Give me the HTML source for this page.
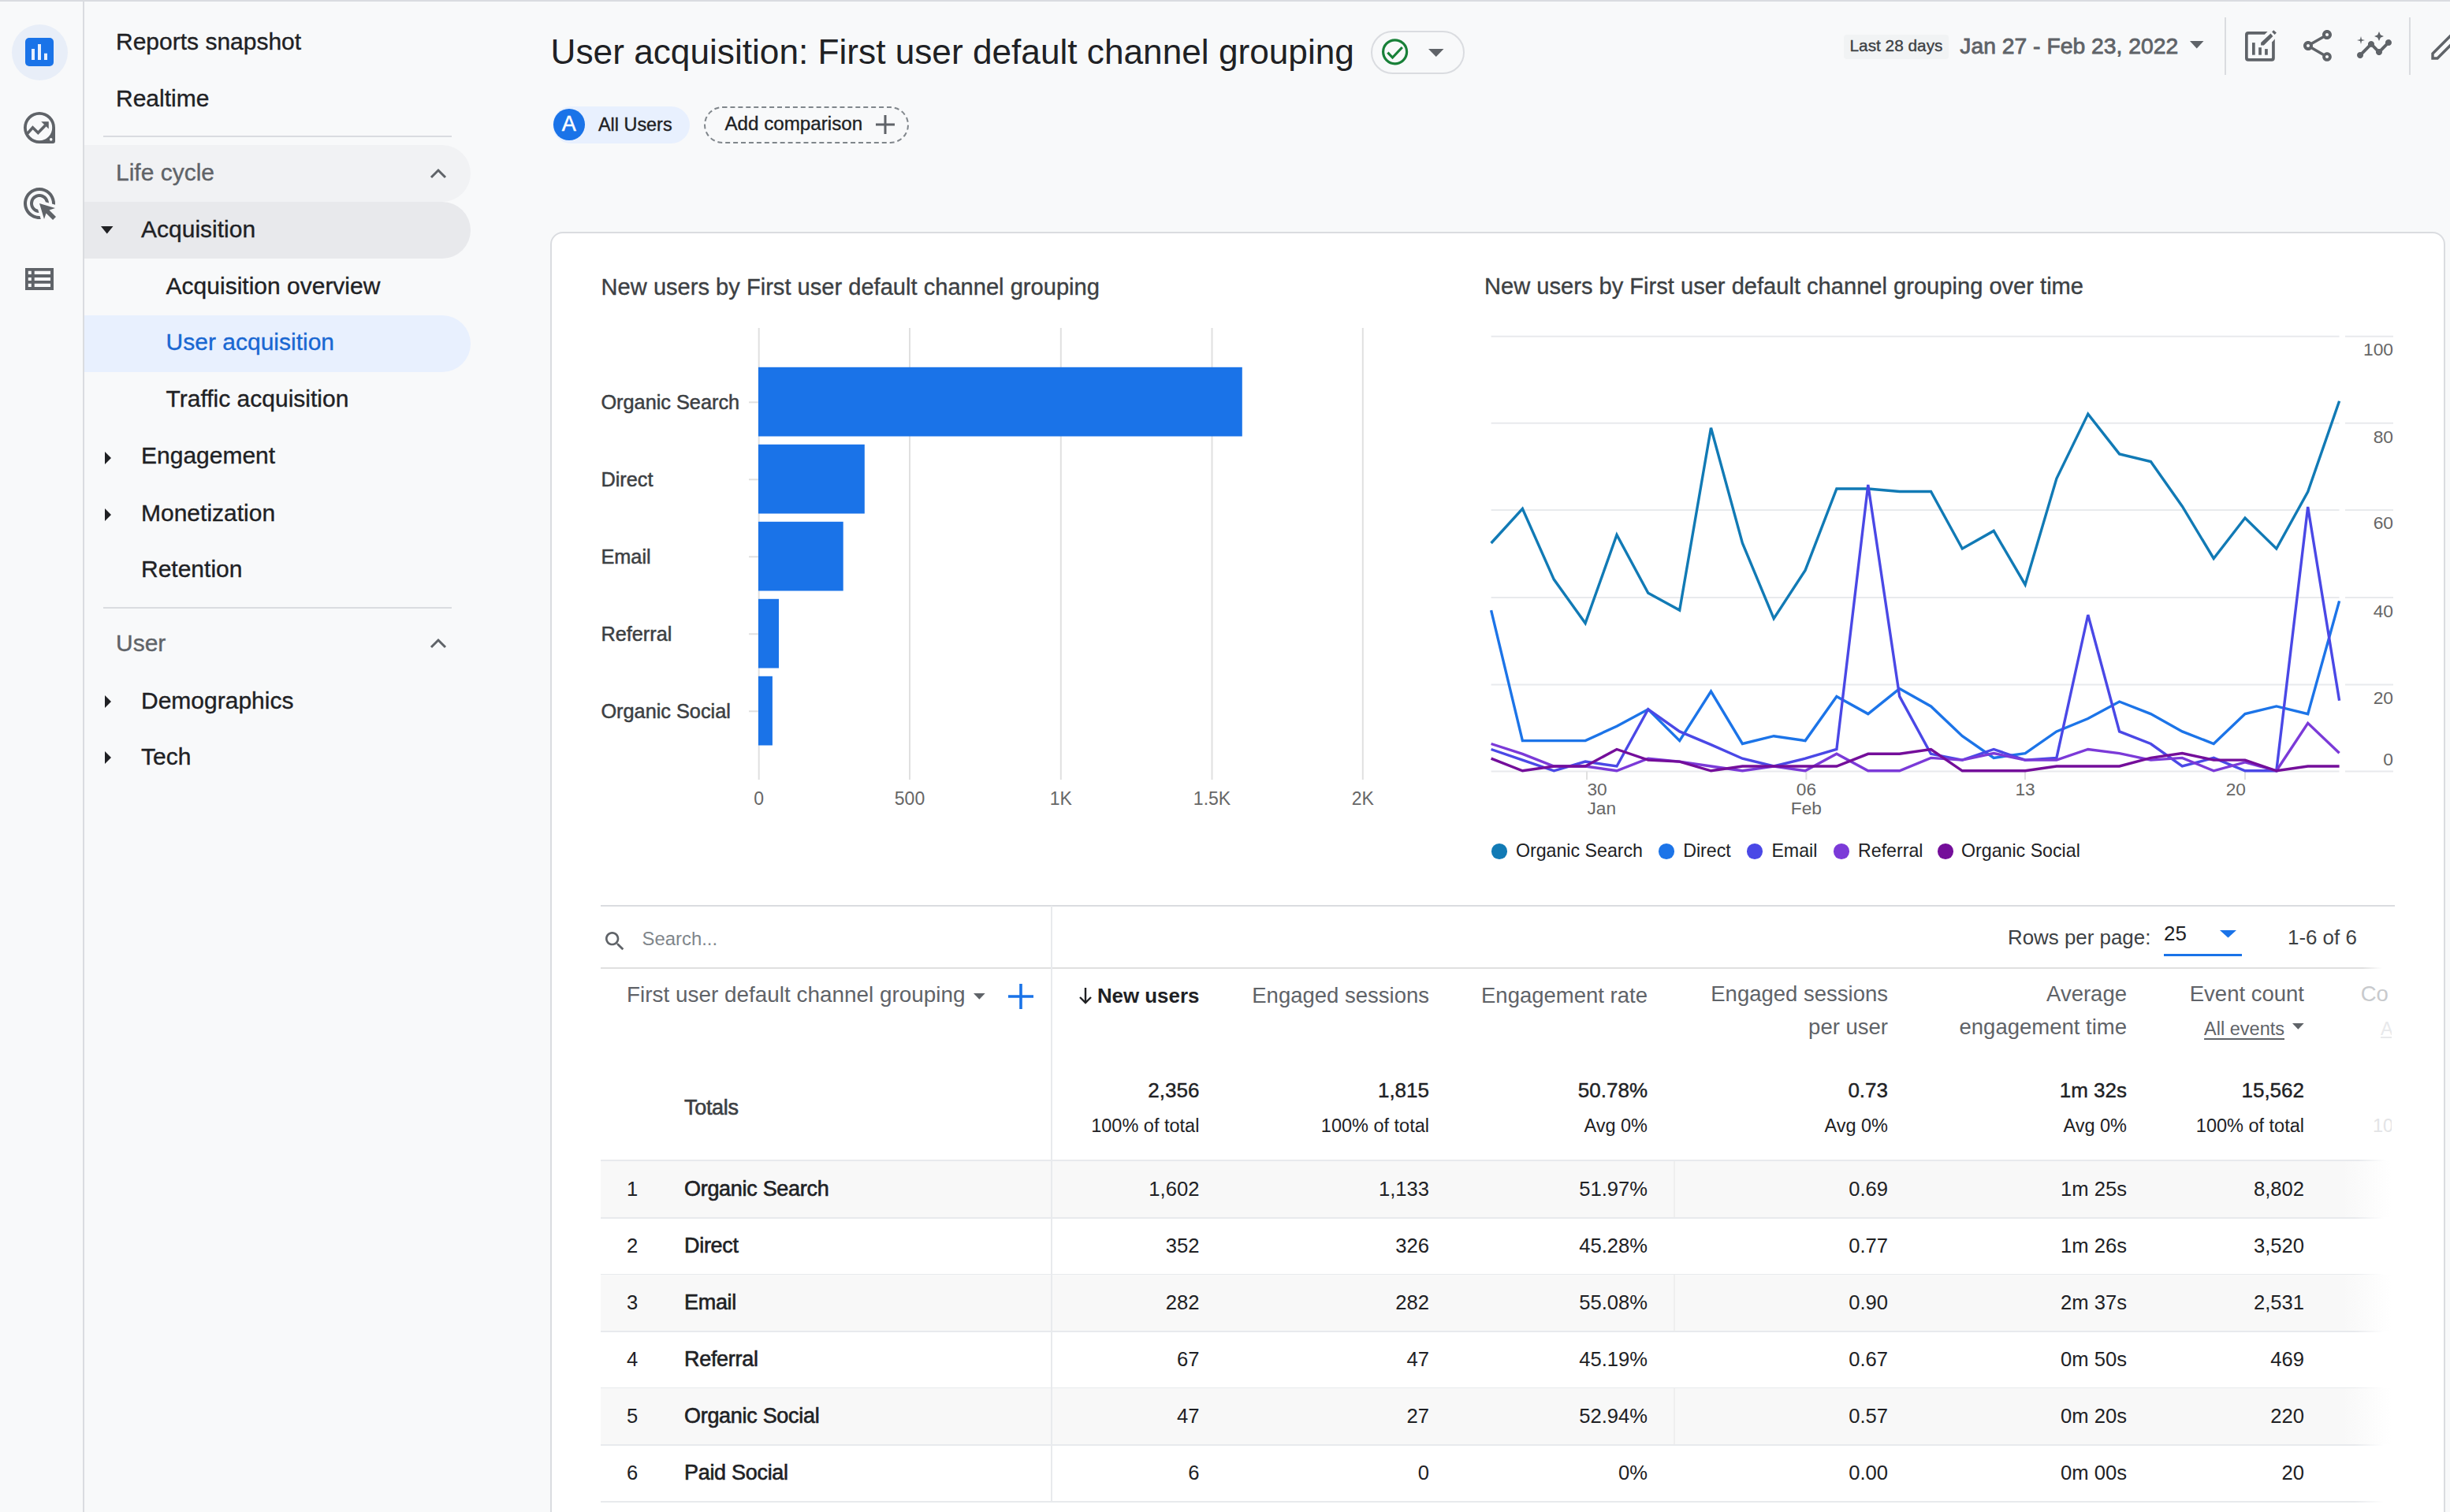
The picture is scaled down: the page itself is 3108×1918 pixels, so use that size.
<!DOCTYPE html>
<html><head><meta charset="utf-8"><style>
html,body{margin:0;padding:0;}
body{width:3108px;height:1918px;position:relative;overflow:hidden;background:#f8f9fa;font-family:"Liberation Sans",sans-serif;}
.t{position:absolute;line-height:0;white-space:nowrap;}
svg{overflow:visible}
</style></head><body>
<div style="position:absolute;left:0.0px;top:0.0px;width:3108.0px;height:2.0px;background:#dadce0;"></div>
<div style="position:absolute;left:105.0px;top:2.0px;width:2.0px;height:1916.0px;background:#dadce0;"></div>
<div style="position:absolute;left:14.5px;top:30.5px;width:71px;height:71px;border-radius:50%;background:#e8eef8"></div>
<svg style="position:absolute;left:32px;top:48px" width="36" height="36" viewBox="0 0 36 36"><rect x="0" y="0" width="36" height="36" rx="5" fill="#1a73e8"/><rect x="8" y="14" width="4" height="14" fill="#e8f0fe"/><rect x="16" y="8" width="4" height="20" fill="#e8f0fe"/><rect x="24" y="19.7" width="4" height="8.3" fill="#e8f0fe"/></svg>
<svg style="position:absolute;left:30px;top:142px" width="40" height="40" viewBox="0 0 40 40"><path fill="#5f6368" fill-rule="evenodd" d="M20 0 A20 20 0 0 0 0 20 A20 20 0 0 0 20 40 L37 40 Q40 40 40 37 L40 20 A20 20 0 0 0 20 0 Z M20 3.8 A16.2 16.2 0 1 0 20 36.2 A16.2 16.2 0 1 0 20 3.8 Z M34.7 33.1 A1.8 1.8 0 1 0 34.7 36.7 A1.8 1.8 0 1 0 34.7 33.1 Z"/><path fill="#5f6368" d="M34.7 33.1 A1.8 1.8 0 1 0 34.7 36.7 A1.8 1.8 0 1 0 34.7 33.1 Z" style="display:none"/><polyline points="4.6,27.6 11.5,19.8 18.3,26.5 27.5,17" fill="none" stroke="#5f6368" stroke-width="3.6" stroke-linejoin="miter"/><polygon points="22.2,12.3 31.75,12.3 31.75,21.4" fill="#5f6368"/></svg>
<svg style="position:absolute;left:26px;top:234px" width="48" height="48" viewBox="0 0 24 24"><path fill="#5f6368" d="M11.71,17.99C8.53,17.84,6,15.22,6,12c0-3.31,2.69-6,6-6c3.22,0,5.84,2.53,5.99,5.71l-2.1-0.63C15.48,9.31,13.89,8,12,8 c-2.21,0-4,1.79-4,4c0,1.89,1.31,3.48,3.08,3.89L11.71,17.99z M22,12c0,0.3-0.01,0.6-0.04,0.9l-1.97-0.59C20,12.21,20,12.1,20,12 c0-4.42-3.58-8-8-8s-8,3.58-8,8s3.58,8,8,8c0.1,0,0.21,0,0.31-0.01l0.59,1.97C12.6,21.99,12.3,22,12,22C6.48,22,2,17.52,2,12 C2,6.48,6.48,2,12,2S22,6.48,22,12z M18.23,16.26L22,15l-10-3l3,10l1.26-3.77l4.27,4.27l1.97-1.97L18.23,16.26z"/></svg>
<svg style="position:absolute;left:32px;top:340px" width="36" height="28" viewBox="0 0 36 28"><path fill="#5f6368" fill-rule="evenodd" d="M0 0H36V28H0Z M3.8 3.8H7.8V7.9H3.8Z M11.7 3.8H32V7.9H11.7Z M3.8 11.9H7.8V15.9H3.8Z M11.7 11.9H32V15.9H11.7Z M3.8 19.8H7.8V24H3.8Z M11.7 19.8H32V24H11.7Z"/></svg>
<div style="position:absolute;left:131.0px;top:171.5px;width:442.0px;height:2.0px;background:#dadce0;"></div>
<div style="position:absolute;left:131.0px;top:769.5px;width:442.0px;height:2.0px;background:#dadce0;"></div>
<div style="position:absolute;left:107px;top:184px;width:490px;height:72px;background:#f1f2f4;border-radius:0 36px 36px 0"></div>
<div style="position:absolute;left:107px;top:256px;width:490px;height:72px;background:#e8e9ec;border-radius:0 36px 36px 0"></div>
<div style="position:absolute;left:107px;top:400px;width:490px;height:72px;background:#e8f0fe;border-radius:0 36px 36px 0"></div>
<div class="t" style="left:147.0px;top:53.0px;font-size:30px;color:#202124;font-weight:400;-webkit-text-stroke:0.35px currentColor;">Reports snapshot</div>
<div class="t" style="left:147.0px;top:125.0px;font-size:30px;color:#202124;font-weight:400;-webkit-text-stroke:0.35px currentColor;">Realtime</div>
<div class="t" style="left:147.0px;top:218.5px;font-size:30px;color:#5f6368;font-weight:400;-webkit-text-stroke:0.35px currentColor;">Life cycle</div>
<div class="t" style="left:179.0px;top:290.5px;font-size:30px;color:#202124;font-weight:400;-webkit-text-stroke:0.35px currentColor;">Acquisition</div>
<div class="t" style="left:210.6px;top:363.0px;font-size:30px;color:#202124;font-weight:400;-webkit-text-stroke:0.35px currentColor;">Acquisition overview</div>
<div class="t" style="left:210.6px;top:434.0px;font-size:30px;color:#1967d2;font-weight:400;-webkit-text-stroke:0.35px currentColor;">User acquisition</div>
<div class="t" style="left:210.6px;top:505.5px;font-size:30px;color:#202124;font-weight:400;-webkit-text-stroke:0.35px currentColor;">Traffic acquisition</div>
<div class="t" style="left:179.0px;top:578.0px;font-size:30px;color:#202124;font-weight:400;-webkit-text-stroke:0.35px currentColor;">Engagement</div>
<div class="t" style="left:179.0px;top:650.5px;font-size:30px;color:#202124;font-weight:400;-webkit-text-stroke:0.35px currentColor;">Monetization</div>
<div class="t" style="left:179.0px;top:722.1px;font-size:30px;color:#202124;font-weight:400;-webkit-text-stroke:0.35px currentColor;">Retention</div>
<div class="t" style="left:147.0px;top:816.1px;font-size:30px;color:#5f6368;font-weight:400;-webkit-text-stroke:0.35px currentColor;">User</div>
<div class="t" style="left:179.0px;top:888.5px;font-size:30px;color:#202124;font-weight:400;-webkit-text-stroke:0.35px currentColor;">Demographics</div>
<div class="t" style="left:179.0px;top:960.0px;font-size:30px;color:#202124;font-weight:400;-webkit-text-stroke:0.35px currentColor;">Tech</div>
<svg style="position:absolute;left:544px;top:209.5px" width="24" height="18" viewBox="0 0 24 18"><polyline points="3,15 12,6 21,15" fill="none" stroke="#5f6368" stroke-width="3"/></svg>
<svg style="position:absolute;left:544px;top:806px" width="24" height="18" viewBox="0 0 24 18"><polyline points="3,15 12,6 21,15" fill="none" stroke="#5f6368" stroke-width="3"/></svg>
<svg style="position:absolute;left:128px;top:287px" width="16" height="10" viewBox="0 0 16 10"><polygon points="0,0 15.5,0 7.75,9.5" fill="#202124"/></svg>
<svg style="position:absolute;left:133px;top:572.5px" width="9" height="16" viewBox="0 0 9 16"><polygon points="0,0 8,8 0,16" fill="#202124"/></svg>
<svg style="position:absolute;left:133px;top:644.6px" width="9" height="16" viewBox="0 0 9 16"><polygon points="0,0 8,8 0,16" fill="#202124"/></svg>
<svg style="position:absolute;left:133px;top:881.9px" width="9" height="16" viewBox="0 0 9 16"><polygon points="0,0 8,8 0,16" fill="#202124"/></svg>
<svg style="position:absolute;left:133px;top:953.4px" width="9" height="16" viewBox="0 0 9 16"><polygon points="0,0 8,8 0,16" fill="#202124"/></svg>
<div class="t" style="left:698.6px;top:65.5px;font-size:44.2px;color:#202124;font-weight:400;">User acquisition: First user default channel grouping</div>
<div style="position:absolute;left:1738.5px;top:38.5px;width:115px;height:51px;border:2px solid #dadce0;border-radius:28px"></div>
<svg style="position:absolute;left:1750px;top:46px" width="40" height="40" viewBox="0 0 40 40"><circle cx="19.6" cy="19.8" r="15" fill="none" stroke="#188038" stroke-width="3.2"/><polyline points="10.4,20.7 16.5,27 28.8,14" fill="none" stroke="#188038" stroke-width="3.2"/></svg>
<svg style="position:absolute;left:1812px;top:62px" width="20" height="10" viewBox="0 0 20 10"><polygon points="0,0 19.5,0 9.75,10" fill="#5f6368"/></svg>
<div style="position:absolute;left:700.5px;top:134.5px;width:174.5px;height:47px;background:#e8f0fe;border-radius:24px"></div>
<div style="position:absolute;left:702px;top:138px;width:39.6px;height:39.6px;background:#1a73e8;border-radius:50%"></div>
<div class="t" style="left:721.8px;transform:translateX(-50%);top:156.8px;font-size:27px;color:#ffffff;font-weight:400;-webkit-text-stroke:0.5px currentColor;">A</div>
<div class="t" style="left:759.0px;top:157.5px;font-size:23.4px;color:#202124;font-weight:400;-webkit-text-stroke:0.35px currentColor;">All Users</div>
<div style="position:absolute;left:892.5px;top:134.5px;width:256px;height:43px;border:2px dashed #80868b;border-radius:24px"></div>
<div class="t" style="left:919.4px;top:157.2px;font-size:24.2px;color:#202124;font-weight:400;-webkit-text-stroke:0.35px currentColor;">Add comparison</div>
<svg style="position:absolute;left:1111px;top:146px" width="24" height="24" viewBox="0 0 24 24"><path d="M12 0V24M0 12H24" stroke="#5f6368" stroke-width="3"/></svg>
<div style="position:absolute;left:2338.5px;top:43.5px;width:133.5px;height:31.5px;background:#f1f3f4;border-radius:4px"></div>
<div class="t" style="left:2346.5px;top:58.4px;font-size:20.8px;color:#3c4043;font-weight:400;-webkit-text-stroke:0.35px currentColor;">Last 28 days</div>
<div class="t" style="left:2486.3px;top:57.9px;font-size:28.3px;color:#5f6368;font-weight:400;-webkit-text-stroke:0.8px currentColor;">Jan 27 - Feb 23, 2022</div>
<svg style="position:absolute;left:2778px;top:52px" width="18" height="10" viewBox="0 0 18 10"><polygon points="0,0 17.5,0 8.75,9.6" fill="#5f6368"/></svg>
<div style="position:absolute;left:2822.0px;top:22.0px;width:2.0px;height:73.0px;background:#dadce0;"></div>
<div style="position:absolute;left:3056.0px;top:22.0px;width:2.0px;height:73.0px;background:#dadce0;"></div>
<svg style="position:absolute;left:2846px;top:36px" width="44" height="44" viewBox="0 0 44 44"><path fill="#5f6368" fill-rule="evenodd" d="M6 4H35.8Q39.8 4 39.8 8V37.7Q39.8 41.7 35.8 41.7H6Q2 41.7 2 37.7V8Q2 4 6 4Z M6.7 7.7H35.1Q36.1 7.7 36.1 8.7V36.9Q36.1 37.9 35.1 37.9H6.7Q5.7 37.9 5.7 36.9V8.7Q5.7 7.7 6.7 7.7Z"/><polygon points="26.9,7.8 30.6,4 35.6,-1 45,-1 45,8.4 39.8,13.6 36.4,17.3" fill="#f8f9fa"/><rect x="11" y="18.1" width="3.7" height="15.6" fill="#5f6368"/><rect x="19.2" y="24.2" width="3.7" height="9.5" fill="#5f6368"/><rect x="27.1" y="26.1" width="3.7" height="7.6" fill="#5f6368"/><polygon points="22.1,17.9 34.5,6.5 37.4,9.9 25.8,21.6 22.1,21.6" fill="#5f6368"/><polygon points="36.1,4.4 38.2,2.3 41.9,5.4 39.6,8.1" fill="#5f6368"/></svg>
<svg style="position:absolute;left:2916px;top:33.8px" width="48" height="48" viewBox="0 0 24 24"><path fill="#5f6368" d="M18 16.08c-.76 0-1.44.3-1.96.77L8.91 12.7c.05-.23.09-.46.09-.7s-.04-.47-.09-.7l7.05-4.11c.54.5 1.250.81 2.04.81 1.66 0 3-1.34 3-3s-1.34-3-3-3-3 1.34-3 3c0 .24.04.47.09.7L8.04 9.81C7.5 9.31 6.79 9 6 9c-1.66 0-3 1.34-3 3s1.34 3 3 3c.79 0 1.5-.31 2.04-.81l7.12 4.16c-.05.21-.08.43-.08.65 0 1.61 1.31 2.92 2.92 2.92 1.61 0 2.92-1.31 2.92-2.920s-1.31-2.92-2.92-2.92zM18 4c.55 0 1 .45 1 1s-.45 1-1 1-1-.45-1-1 .45-1 1-1zM6 13c-.55 0-1-.45-1-1s.45-1 1-1 1 .45 1 1-.45 1-1 1zm12 7.02c-.55 0-1-.45-1-1s.45-1 1-1 1 .45 1 1-.45 1-1 1z"/></svg>
<svg style="position:absolute;left:2988px;top:34px" width="48" height="48" viewBox="0 0 24 24"><path fill="#5f6368" d="M21,8c-1.45,0-2.26,1.44-1.93,2.51l-3.55,3.56c-0.3-0.09-0.74-0.09-1.04,0l-2.55-2.55C12.27,10.45,11.46,9,10,9 c-1.45,0-2.27,1.440-1.93,2.52l-4.56,4.55C2.44,15.74,1,16.55,1,18c0,1.1,0.9,2,2,2c1.45,0,2.26-1.44,1.93-2.51l4.55-4.56 c0.3,0.09,0.74,0.09,1.04,0l2.55,2.55C12.73,16.55,13.54,18,15,18c1.45,0,2.27-1.44,1.93-2.52l3.56-3.55 C21.56,12.26,23,11.45,23,10C23,8.9,22.1,8,21,8z M15,9l0.94-2.07L18,6l-2.06-0.93L15,3l-0.92,2.07L12,6l2.08,0.93L15,9z M3.5,11L4,9l2-0.5L4,8L3.5,6L3,8L1,8.5L3,9L3.5,11z"/></svg>
<svg style="position:absolute;left:3080px;top:30px" width="28" height="50" viewBox="0 0 28 50"><path d="M6 44 L6 38 L40 4 L46 10 L12 44 Z" fill="none" stroke="#5f6368" stroke-width="3.4"/></svg>
<div style="position:absolute;left:698px;top:293.5px;width:2404px;height:1700px;background:#fff;border:2px solid #dadce0;border-radius:16px;box-sizing:border-box"></div>
<div class="t" style="left:762.6px;top:363.8px;font-size:29.1px;color:#3c4043;font-weight:400;-webkit-text-stroke:0.35px currentColor;">New users by First user default channel grouping</div>
<svg style="position:absolute;left:0;top:0" width="3108" height="1918"><line x1="962.7" y1="416" x2="962.7" y2="989" stroke="#e0e0e0" stroke-width="2"/><line x1="1154" y1="416" x2="1154" y2="989" stroke="#e0e0e0" stroke-width="2"/><line x1="1345.8" y1="416" x2="1345.8" y2="989" stroke="#e0e0e0" stroke-width="2"/><line x1="1537.5" y1="416" x2="1537.5" y2="989" stroke="#e0e0e0" stroke-width="2"/><line x1="1728.8" y1="416" x2="1728.8" y2="989" stroke="#e0e0e0" stroke-width="2"/><rect x="962" y="465.8" width="613.8" height="87.7" fill="#1a73e8"/><line x1="950" y1="510.3" x2="962" y2="510.3" stroke="#e0e0e0" stroke-width="2"/><rect x="962" y="563.8" width="134.8" height="87.7" fill="#1a73e8"/><line x1="950" y1="608.3" x2="962" y2="608.3" stroke="#e0e0e0" stroke-width="2"/><rect x="962" y="661.8" width="107.7" height="87.7" fill="#1a73e8"/><line x1="950" y1="706.3" x2="962" y2="706.3" stroke="#e0e0e0" stroke-width="2"/><rect x="962" y="759.8" width="26.0" height="87.7" fill="#1a73e8"/><line x1="950" y1="804.3" x2="962" y2="804.3" stroke="#e0e0e0" stroke-width="2"/><rect x="962" y="857.8" width="17.9" height="87.7" fill="#1a73e8"/><line x1="950" y1="902.3" x2="962" y2="902.3" stroke="#e0e0e0" stroke-width="2"/></svg>
<div class="t" style="left:762.4px;top:510.1px;font-size:25.3px;color:#3c4043;font-weight:400;-webkit-text-stroke:0.5px currentColor;">Organic Search</div>
<div class="t" style="left:762.4px;top:608.1px;font-size:25.3px;color:#3c4043;font-weight:400;-webkit-text-stroke:0.5px currentColor;">Direct</div>
<div class="t" style="left:762.4px;top:706.1px;font-size:25.3px;color:#3c4043;font-weight:400;-webkit-text-stroke:0.5px currentColor;">Email</div>
<div class="t" style="left:762.4px;top:804.1px;font-size:25.3px;color:#3c4043;font-weight:400;-webkit-text-stroke:0.5px currentColor;">Referral</div>
<div class="t" style="left:762.4px;top:902.1px;font-size:25.3px;color:#3c4043;font-weight:400;-webkit-text-stroke:0.5px currentColor;">Organic Social</div>
<div class="t" style="left:962.7px;transform:translateX(-50%);top:1013.0px;font-size:23px;color:#666666;font-weight:400;">0</div>
<div class="t" style="left:1154.0px;transform:translateX(-50%);top:1013.0px;font-size:23px;color:#666666;font-weight:400;">500</div>
<div class="t" style="left:1345.8px;transform:translateX(-50%);top:1013.0px;font-size:23px;color:#666666;font-weight:400;">1K</div>
<div class="t" style="left:1537.5px;transform:translateX(-50%);top:1013.0px;font-size:23px;color:#666666;font-weight:400;">1.5K</div>
<div class="t" style="left:1728.8px;transform:translateX(-50%);top:1013.0px;font-size:23px;color:#666666;font-weight:400;">2K</div>
<div class="t" style="left:1883.0px;top:362.8px;font-size:29.1px;color:#3c4043;font-weight:400;-webkit-text-stroke:0.35px currentColor;">New users by First user default channel grouping over time</div>
<svg style="position:absolute;left:0;top:0" width="3108" height="1918"><line x1="1891.6" y1="426.8" x2="2967.5" y2="426.8" stroke="#e8eaed" stroke-width="2"/><line x1="2975" y1="426.8" x2="3036" y2="426.8" stroke="#e8eaed" stroke-width="2"/><line x1="1891.6" y1="536.8" x2="2967.5" y2="536.8" stroke="#e8eaed" stroke-width="2"/><line x1="2975" y1="536.8" x2="3036" y2="536.8" stroke="#e8eaed" stroke-width="2"/><line x1="1891.6" y1="646.9" x2="2967.5" y2="646.9" stroke="#e8eaed" stroke-width="2"/><line x1="2975" y1="646.9" x2="3036" y2="646.9" stroke="#e8eaed" stroke-width="2"/><line x1="1891.6" y1="758" x2="2967.5" y2="758" stroke="#e8eaed" stroke-width="2"/><line x1="2975" y1="758" x2="3036" y2="758" stroke="#e8eaed" stroke-width="2"/><line x1="1891.6" y1="868.5" x2="2967.5" y2="868.5" stroke="#e8eaed" stroke-width="2"/><line x1="2975" y1="868.5" x2="3036" y2="868.5" stroke="#e8eaed" stroke-width="2"/><line x1="1891.6" y1="978.6" x2="2967.5" y2="978.6" stroke="#e8eaed" stroke-width="2"/><line x1="2975" y1="978.6" x2="3036" y2="978.6" stroke="#e8eaed" stroke-width="2"/><line x1="2013" y1="978.6" x2="2013" y2="989" stroke="#e0e0e0" stroke-width="2"/><line x1="2291.4" y1="978.6" x2="2291.4" y2="989" stroke="#e0e0e0" stroke-width="2"/><line x1="2569" y1="978.6" x2="2569" y2="989" stroke="#e0e0e0" stroke-width="2"/><line x1="2848" y1="978.6" x2="2848" y2="989" stroke="#e0e0e0" stroke-width="2"/><polyline points="1891.6,689.0 1931.4,645.3 1971.3,735.1 2011.1,790.5 2051.0,678.5 2090.8,752.2 2130.7,774.1 2170.5,542.7 2210.4,689.0 2250.2,784.6 2290.1,723.4 2329.9,620.0 2369.8,620.0 2409.7,623.5 2449.5,623.5 2489.3,696.0 2529.2,673.4 2569.1,741.7 2608.9,607.1 2648.8,525.1 2688.6,575.9 2728.4,585.6 2768.3,642.2 2808.2,708.5 2848.0,657.0 2887.8,696.0 2927.7,623.9 2967.6,508.7" fill="none" stroke="#117ab5" stroke-width="3.4" stroke-linejoin="miter" stroke-miterlimit="4"/><polyline points="1891.6,774.1 1931.4,939.6 1971.3,939.6 2011.1,939.6 2051.0,921.2 2090.8,899.8 2130.7,939.6 2170.5,877.1 2210.4,943.5 2250.2,933.7 2290.1,939.6 2329.9,883.4 2369.8,905.6 2409.7,873.6 2449.5,895.9 2489.3,933.7 2529.2,961.4 2569.1,955.6 2608.9,927.9 2648.8,911.5 2688.6,890.0 2728.4,905.6 2768.3,927.9 2808.2,943.5 2848.0,905.6 2887.8,895.9 2927.7,905.6 2967.6,762.4" fill="none" stroke="#1c74e8" stroke-width="3.4" stroke-linejoin="miter" stroke-miterlimit="4"/><polyline points="1891.6,950.5 1931.4,964.1 1971.3,977.8 2011.1,966.1 2051.0,972.0 2090.8,899.8 2130.7,927.9 2170.5,944.6 2210.4,962.2 2250.2,972.0 2290.1,962.2 2329.9,950.5 2369.8,614.9 2409.7,883.4 2449.5,956.3 2489.3,964.1 2529.2,950.5 2569.1,964.1 2608.9,961.4 2648.8,780.0 2688.6,927.9 2728.4,943.5 2768.3,972.0 2808.2,961.4 2848.0,977.8 2887.8,977.8 2927.7,643.0 2967.6,888.8" fill="none" stroke="#4a48e6" stroke-width="3.4" stroke-linejoin="miter" stroke-miterlimit="4"/><polyline points="1891.6,943.5 1931.4,956.3 1971.3,972.0 2011.1,972.0 2051.0,977.8 2090.8,962.2 2130.7,966.1 2170.5,972.0 2210.4,977.8 2250.2,972.0 2290.1,977.8 2329.9,956.3 2369.8,977.8 2409.7,977.8 2449.5,961.4 2489.3,964.1 2529.2,955.6 2569.1,964.1 2608.9,964.1 2648.8,950.5 2688.6,955.6 2728.4,964.1 2768.3,961.4 2808.2,977.8 2848.0,966.9 2887.8,977.8 2927.7,917.3 2967.6,955.2" fill="none" stroke="#7b3ad8" stroke-width="3.4" stroke-linejoin="miter" stroke-miterlimit="4"/><polyline points="1891.6,962.2 1931.4,977.8 1971.3,972.0 2011.1,972.0 2051.0,950.5 2090.8,964.1 2130.7,966.1 2170.5,977.8 2210.4,972.0 2250.2,972.0 2290.1,972.0 2329.9,972.0 2369.8,956.3 2409.7,956.3 2449.5,950.5 2489.3,977.8 2529.2,977.8 2569.1,977.8 2608.9,972.0 2648.8,972.0 2688.6,972.0 2728.4,961.4 2768.3,955.6 2808.2,964.1 2848.0,964.1 2887.8,977.8 2927.7,972.0 2967.6,972.0" fill="none" stroke="#740e9a" stroke-width="3.4" stroke-linejoin="miter" stroke-miterlimit="4"/></svg>
<div class="t" style="right:72.0px;top:443.0px;font-size:22.8px;color:#666666;font-weight:400;">100</div>
<div class="t" style="right:72.0px;top:553.7px;font-size:22.8px;color:#666666;font-weight:400;">80</div>
<div class="t" style="right:72.0px;top:663.0px;font-size:22.8px;color:#666666;font-weight:400;">60</div>
<div class="t" style="right:72.0px;top:775.0px;font-size:22.8px;color:#666666;font-weight:400;">40</div>
<div class="t" style="right:72.0px;top:884.7px;font-size:22.8px;color:#666666;font-weight:400;">20</div>
<div class="t" style="right:72.0px;top:962.6px;font-size:22.8px;color:#666666;font-weight:400;">0</div>
<div class="t" style="left:2013.5px;top:1001.1px;font-size:22.7px;color:#666666;font-weight:400;">30</div>
<div class="t" style="left:2013.5px;top:1025.1px;font-size:22.7px;color:#666666;font-weight:400;">Jan</div>
<div class="t" style="left:2291.4px;transform:translateX(-50%);top:1001.1px;font-size:22.7px;color:#666666;font-weight:400;">06</div>
<div class="t" style="left:2291.4px;transform:translateX(-50%);top:1025.1px;font-size:22.7px;color:#666666;font-weight:400;">Feb</div>
<div class="t" style="left:2569.0px;transform:translateX(-50%);top:1001.1px;font-size:22.7px;color:#666666;font-weight:400;">13</div>
<div class="t" style="right:259.0px;top:1001.1px;font-size:22.7px;color:#666666;font-weight:400;">20</div>
<div style="position:absolute;left:1892.2px;top:1070.2px;width:19.6px;height:19.6px;border-radius:50%;background:#117ab5"></div>
<div class="t" style="left:1922.9px;top:1079.3px;font-size:23.2px;color:#202124;font-weight:400;">Organic Search</div>
<div style="position:absolute;left:2104.1px;top:1070.2px;width:19.6px;height:19.6px;border-radius:50%;background:#1c74e8"></div>
<div class="t" style="left:2135.2px;top:1079.3px;font-size:23.2px;color:#202124;font-weight:400;">Direct</div>
<div style="position:absolute;left:2216.0px;top:1070.2px;width:19.6px;height:19.6px;border-radius:50%;background:#4a48e6"></div>
<div class="t" style="left:2247.4px;top:1079.3px;font-size:23.2px;color:#202124;font-weight:400;">Email</div>
<div style="position:absolute;left:2326.2px;top:1070.2px;width:19.6px;height:19.6px;border-radius:50%;background:#7b3ad8"></div>
<div class="t" style="left:2357.0px;top:1079.3px;font-size:23.2px;color:#202124;font-weight:400;">Referral</div>
<div style="position:absolute;left:2458.0px;top:1070.2px;width:19.6px;height:19.6px;border-radius:50%;background:#740e9a"></div>
<div class="t" style="left:2488.0px;top:1079.3px;font-size:23.2px;color:#202124;font-weight:400;">Organic Social</div>
<div style="position:absolute;left:762.0px;top:1147.7px;width:2276.0px;height:2.0px;background:#dadce0;"></div>
<div style="position:absolute;left:762.0px;top:1226.8px;width:2276.0px;height:2.0px;background:linear-gradient(90deg,#e0e0e0 0,#e0e0e0 2235px,rgba(255,255,255,0) 2260px);"></div>
<div style="position:absolute;left:1333.3px;top:1149.0px;width:2.0px;height:755.0px;background:#e8eaed;"></div>
<svg style="position:absolute;left:764px;top:1178px" width="32" height="32" viewBox="0 0 24 24"><path fill="#5f6368" d="M15.5 14h-.79l-.28-.27C15.41 12.59 16 11.11 16 9.5 16 5.91 13.09 3 9.5 3S3 5.91 3 9.5 5.91 16 9.5 16c1.61 0 3.09-.59 4.23-1.57l.27.28v.79l5 4.99L20.49 19l-4.99-5zm-6 0C7.01 14 5 11.99 5 9.5S7.01 5 9.5 5 14 7.01 14 9.5 11.99 14 9.5 14z"/></svg>
<div class="t" style="left:814.5px;top:1190.6px;font-size:23.9px;color:#80868b;font-weight:400;">Search...</div>
<div class="t" style="left:2547.0px;top:1188.7px;font-size:25.9px;color:#3c4043;font-weight:400;">Rows per page:</div>
<div class="t" style="left:2745.0px;top:1183.5px;font-size:25.9px;color:#202124;font-weight:400;">25</div>
<div style="position:absolute;left:2745.0px;top:1209.5px;width:99.0px;height:3.0px;background:#1a73e8;"></div>
<svg style="position:absolute;left:2816px;top:1179.5px" width="21" height="10" viewBox="0 0 21 10"><polygon points="0,0 21,0 10.5,9.5" fill="#1a73e8"/></svg>
<div class="t" style="left:2902.0px;top:1188.7px;font-size:25.9px;color:#3c4043;font-weight:400;">1-6 of 6</div>
<div class="t" style="left:795.0px;top:1262.0px;font-size:27.9px;color:#5f6368;font-weight:400;">First user default channel grouping</div>
<svg style="position:absolute;left:1234.7px;top:1259.8px" width="15" height="8" viewBox="0 0 15 8"><polygon points="0,0 14.7,0 7.35,7.8" fill="#5f6368"/></svg>
<svg style="position:absolute;left:1278.8px;top:1248.4px" width="32" height="32" viewBox="0 0 32 32"><path d="M16 0V32M0 16H32" stroke="#1a73e8" stroke-width="3.6"/></svg>
<svg style="position:absolute;left:1367px;top:1251px" width="20" height="24" viewBox="0 0 20 24"><path d="M10 2V21M3 14L10 21L17 14" fill="none" stroke="#202124" stroke-width="2.4"/></svg>
<div class="t" style="right:1586.6px;top:1262.7px;font-size:25.9px;color:#202124;font-weight:700;">New users</div>
<div class="t" style="right:1295.0px;top:1262.7px;font-size:27.5px;color:#5f6368;font-weight:400;">Engaged sessions</div>
<div class="t" style="right:1018.0px;top:1262.7px;font-size:27.5px;color:#5f6368;font-weight:400;">Engagement rate</div>
<div class="t" style="right:713.0px;top:1260.8px;font-size:27.5px;color:#5f6368;font-weight:400;">Engaged sessions</div>
<div class="t" style="right:713.0px;top:1302.9px;font-size:27.5px;color:#5f6368;font-weight:400;">per user</div>
<div class="t" style="right:410.0px;top:1260.8px;font-size:27.5px;color:#5f6368;font-weight:400;">Average</div>
<div class="t" style="right:410.0px;top:1302.9px;font-size:27.5px;color:#5f6368;font-weight:400;">engagement time</div>
<div class="t" style="right:185.0px;top:1260.8px;font-size:27.5px;color:#5f6368;font-weight:400;">Event count</div>
<div class="t" style="right:210.0px;top:1304.8px;font-size:23.5px;color:#5f6368;font-weight:400;text-decoration:underline;text-underline-offset:4px;">All events</div>
<svg style="position:absolute;left:2908px;top:1298px" width="15" height="8" viewBox="0 0 15 8"><polygon points="0,0 14.7,0 7.35,7.8" fill="#5f6368"/></svg>
<div class="t" style="left:2994.7px;top:1260.8px;font-size:27.5px;color:#c8cacd;font-weight:400;">Co</div>
<div class="t" style="left:868.0px;top:1404.5px;font-size:27px;color:#3c4043;font-weight:400;letter-spacing:-0.3px;-webkit-text-stroke:0.6px currentColor;">Totals</div>
<div class="t" style="right:1586.6px;top:1383.4px;font-size:26px;color:#202124;font-weight:400;-webkit-text-stroke:0.4px currentColor;">2,356</div>
<div class="t" style="right:1586.6px;top:1428.3px;font-size:23.5px;color:#202124;font-weight:400;">100% of total</div>
<div class="t" style="right:1295.0px;top:1383.4px;font-size:26px;color:#202124;font-weight:400;-webkit-text-stroke:0.4px currentColor;">1,815</div>
<div class="t" style="right:1295.0px;top:1428.3px;font-size:23.5px;color:#202124;font-weight:400;">100% of total</div>
<div class="t" style="right:1018.0px;top:1383.4px;font-size:26px;color:#202124;font-weight:400;-webkit-text-stroke:0.4px currentColor;">50.78%</div>
<div class="t" style="right:1018.0px;top:1428.3px;font-size:23.5px;color:#202124;font-weight:400;">Avg 0%</div>
<div class="t" style="right:713.0px;top:1383.4px;font-size:26px;color:#202124;font-weight:400;-webkit-text-stroke:0.4px currentColor;">0.73</div>
<div class="t" style="right:713.0px;top:1428.3px;font-size:23.5px;color:#202124;font-weight:400;">Avg 0%</div>
<div class="t" style="right:410.0px;top:1383.4px;font-size:26px;color:#202124;font-weight:400;-webkit-text-stroke:0.4px currentColor;">1m 32s</div>
<div class="t" style="right:410.0px;top:1428.3px;font-size:23.5px;color:#202124;font-weight:400;">Avg 0%</div>
<div class="t" style="right:185.0px;top:1383.4px;font-size:26px;color:#202124;font-weight:400;-webkit-text-stroke:0.4px currentColor;">15,562</div>
<div class="t" style="right:185.0px;top:1428.3px;font-size:23.5px;color:#202124;font-weight:400;">100% of total</div>
<div class="t" style="left:3010.0px;top:1428.3px;font-size:23.5px;color:#e3e4e6;font-weight:400;">10</div>
<div class="t" style="left:3020.0px;top:1304.8px;font-size:23.5px;color:#e8e9eb;font-weight:400;text-decoration:underline;">A</div>
<div style="position:absolute;left:762.0px;top:1471.0px;width:2276.0px;height:2.0px;background:linear-gradient(90deg,#e8eaed 0,#e8eaed 2230px,rgba(255,255,255,0) 2265px);"></div>
<div style="position:absolute;left:762.0px;top:1473.0px;width:2276.0px;height:71.0px;background:linear-gradient(90deg,#f8f8f8 0,#f8f8f8 2210px,#ffffff 2272px);"></div>
<div style="position:absolute;left:2123.0px;top:1473.0px;width:2.0px;height:71.0px;background:#efefef;"></div>
<div style="position:absolute;left:762.0px;top:1544.0px;width:2276.0px;height:2.0px;background:linear-gradient(90deg,#e8eaed 0,#e8eaed 2225px,rgba(255,255,255,0) 2262px);"></div>
<div class="t" style="left:795.0px;top:1508.0px;font-size:25.6px;color:#202124;font-weight:400;">1</div>
<div class="t" style="left:868.0px;top:1507.5px;font-size:27px;color:#202124;font-weight:400;letter-spacing:-0.3px;-webkit-text-stroke:0.6px currentColor;">Organic Search</div>
<div class="t" style="right:1586.6px;top:1508.0px;font-size:25.6px;color:#202124;font-weight:400;">1,602</div>
<div class="t" style="right:1295.0px;top:1508.0px;font-size:25.6px;color:#202124;font-weight:400;">1,133</div>
<div class="t" style="right:1018.0px;top:1508.0px;font-size:25.6px;color:#202124;font-weight:400;">51.97%</div>
<div class="t" style="right:713.0px;top:1508.0px;font-size:25.6px;color:#202124;font-weight:400;">0.69</div>
<div class="t" style="right:410.0px;top:1508.0px;font-size:25.6px;color:#202124;font-weight:400;">1m 25s</div>
<div class="t" style="right:185.0px;top:1508.0px;font-size:25.6px;color:#202124;font-weight:400;">8,802</div>
<div style="position:absolute;left:762.0px;top:1616.0px;width:2276.0px;height:2.0px;background:linear-gradient(90deg,#e8eaed 0,#e8eaed 2225px,rgba(255,255,255,0) 2262px);"></div>
<div class="t" style="left:795.0px;top:1580.0px;font-size:25.6px;color:#202124;font-weight:400;">2</div>
<div class="t" style="left:868.0px;top:1579.5px;font-size:27px;color:#202124;font-weight:400;letter-spacing:-0.3px;-webkit-text-stroke:0.6px currentColor;">Direct</div>
<div class="t" style="right:1586.6px;top:1580.0px;font-size:25.6px;color:#202124;font-weight:400;">352</div>
<div class="t" style="right:1295.0px;top:1580.0px;font-size:25.6px;color:#202124;font-weight:400;">326</div>
<div class="t" style="right:1018.0px;top:1580.0px;font-size:25.6px;color:#202124;font-weight:400;">45.28%</div>
<div class="t" style="right:713.0px;top:1580.0px;font-size:25.6px;color:#202124;font-weight:400;">0.77</div>
<div class="t" style="right:410.0px;top:1580.0px;font-size:25.6px;color:#202124;font-weight:400;">1m 26s</div>
<div class="t" style="right:185.0px;top:1580.0px;font-size:25.6px;color:#202124;font-weight:400;">3,520</div>
<div style="position:absolute;left:762.0px;top:1617.0px;width:2276.0px;height:71.0px;background:linear-gradient(90deg,#f8f8f8 0,#f8f8f8 2210px,#ffffff 2272px);"></div>
<div style="position:absolute;left:2123.0px;top:1617.0px;width:2.0px;height:71.0px;background:#efefef;"></div>
<div style="position:absolute;left:762.0px;top:1688.0px;width:2276.0px;height:2.0px;background:linear-gradient(90deg,#e8eaed 0,#e8eaed 2225px,rgba(255,255,255,0) 2262px);"></div>
<div class="t" style="left:795.0px;top:1652.0px;font-size:25.6px;color:#202124;font-weight:400;">3</div>
<div class="t" style="left:868.0px;top:1651.5px;font-size:27px;color:#202124;font-weight:400;letter-spacing:-0.3px;-webkit-text-stroke:0.6px currentColor;">Email</div>
<div class="t" style="right:1586.6px;top:1652.0px;font-size:25.6px;color:#202124;font-weight:400;">282</div>
<div class="t" style="right:1295.0px;top:1652.0px;font-size:25.6px;color:#202124;font-weight:400;">282</div>
<div class="t" style="right:1018.0px;top:1652.0px;font-size:25.6px;color:#202124;font-weight:400;">55.08%</div>
<div class="t" style="right:713.0px;top:1652.0px;font-size:25.6px;color:#202124;font-weight:400;">0.90</div>
<div class="t" style="right:410.0px;top:1652.0px;font-size:25.6px;color:#202124;font-weight:400;">2m 37s</div>
<div class="t" style="right:185.0px;top:1652.0px;font-size:25.6px;color:#202124;font-weight:400;">2,531</div>
<div style="position:absolute;left:762.0px;top:1760.0px;width:2276.0px;height:2.0px;background:linear-gradient(90deg,#e8eaed 0,#e8eaed 2225px,rgba(255,255,255,0) 2262px);"></div>
<div class="t" style="left:795.0px;top:1724.0px;font-size:25.6px;color:#202124;font-weight:400;">4</div>
<div class="t" style="left:868.0px;top:1723.5px;font-size:27px;color:#202124;font-weight:400;letter-spacing:-0.3px;-webkit-text-stroke:0.6px currentColor;">Referral</div>
<div class="t" style="right:1586.6px;top:1724.0px;font-size:25.6px;color:#202124;font-weight:400;">67</div>
<div class="t" style="right:1295.0px;top:1724.0px;font-size:25.6px;color:#202124;font-weight:400;">47</div>
<div class="t" style="right:1018.0px;top:1724.0px;font-size:25.6px;color:#202124;font-weight:400;">45.19%</div>
<div class="t" style="right:713.0px;top:1724.0px;font-size:25.6px;color:#202124;font-weight:400;">0.67</div>
<div class="t" style="right:410.0px;top:1724.0px;font-size:25.6px;color:#202124;font-weight:400;">0m 50s</div>
<div class="t" style="right:185.0px;top:1724.0px;font-size:25.6px;color:#202124;font-weight:400;">469</div>
<div style="position:absolute;left:762.0px;top:1761.0px;width:2276.0px;height:71.0px;background:linear-gradient(90deg,#f8f8f8 0,#f8f8f8 2210px,#ffffff 2272px);"></div>
<div style="position:absolute;left:2123.0px;top:1761.0px;width:2.0px;height:71.0px;background:#efefef;"></div>
<div style="position:absolute;left:762.0px;top:1832.0px;width:2276.0px;height:2.0px;background:linear-gradient(90deg,#e8eaed 0,#e8eaed 2225px,rgba(255,255,255,0) 2262px);"></div>
<div class="t" style="left:795.0px;top:1796.0px;font-size:25.6px;color:#202124;font-weight:400;">5</div>
<div class="t" style="left:868.0px;top:1795.5px;font-size:27px;color:#202124;font-weight:400;letter-spacing:-0.3px;-webkit-text-stroke:0.6px currentColor;">Organic Social</div>
<div class="t" style="right:1586.6px;top:1796.0px;font-size:25.6px;color:#202124;font-weight:400;">47</div>
<div class="t" style="right:1295.0px;top:1796.0px;font-size:25.6px;color:#202124;font-weight:400;">27</div>
<div class="t" style="right:1018.0px;top:1796.0px;font-size:25.6px;color:#202124;font-weight:400;">52.94%</div>
<div class="t" style="right:713.0px;top:1796.0px;font-size:25.6px;color:#202124;font-weight:400;">0.57</div>
<div class="t" style="right:410.0px;top:1796.0px;font-size:25.6px;color:#202124;font-weight:400;">0m 20s</div>
<div class="t" style="right:185.0px;top:1796.0px;font-size:25.6px;color:#202124;font-weight:400;">220</div>
<div style="position:absolute;left:762.0px;top:1904.0px;width:2276.0px;height:2.0px;background:linear-gradient(90deg,#e8eaed 0,#e8eaed 2225px,rgba(255,255,255,0) 2262px);"></div>
<div class="t" style="left:795.0px;top:1868.0px;font-size:25.6px;color:#202124;font-weight:400;">6</div>
<div class="t" style="left:868.0px;top:1867.5px;font-size:27px;color:#202124;font-weight:400;letter-spacing:-0.3px;-webkit-text-stroke:0.6px currentColor;">Paid Social</div>
<div class="t" style="right:1586.6px;top:1868.0px;font-size:25.6px;color:#202124;font-weight:400;">6</div>
<div class="t" style="right:1295.0px;top:1868.0px;font-size:25.6px;color:#202124;font-weight:400;">0</div>
<div class="t" style="right:1018.0px;top:1868.0px;font-size:25.6px;color:#202124;font-weight:400;">0%</div>
<div class="t" style="right:713.0px;top:1868.0px;font-size:25.6px;color:#202124;font-weight:400;">0.00</div>
<div class="t" style="right:410.0px;top:1868.0px;font-size:25.6px;color:#202124;font-weight:400;">0m 00s</div>
<div class="t" style="right:185.0px;top:1868.0px;font-size:25.6px;color:#202124;font-weight:400;">20</div>
<div style="position:absolute;left:1333.3px;top:1149.0px;width:2.0px;height:755.0px;background:#e8eaed;"></div>
<div style="position:absolute;left:3034px;top:1150px;width:64px;height:770px;background:#fff"></div>
</body></html>
